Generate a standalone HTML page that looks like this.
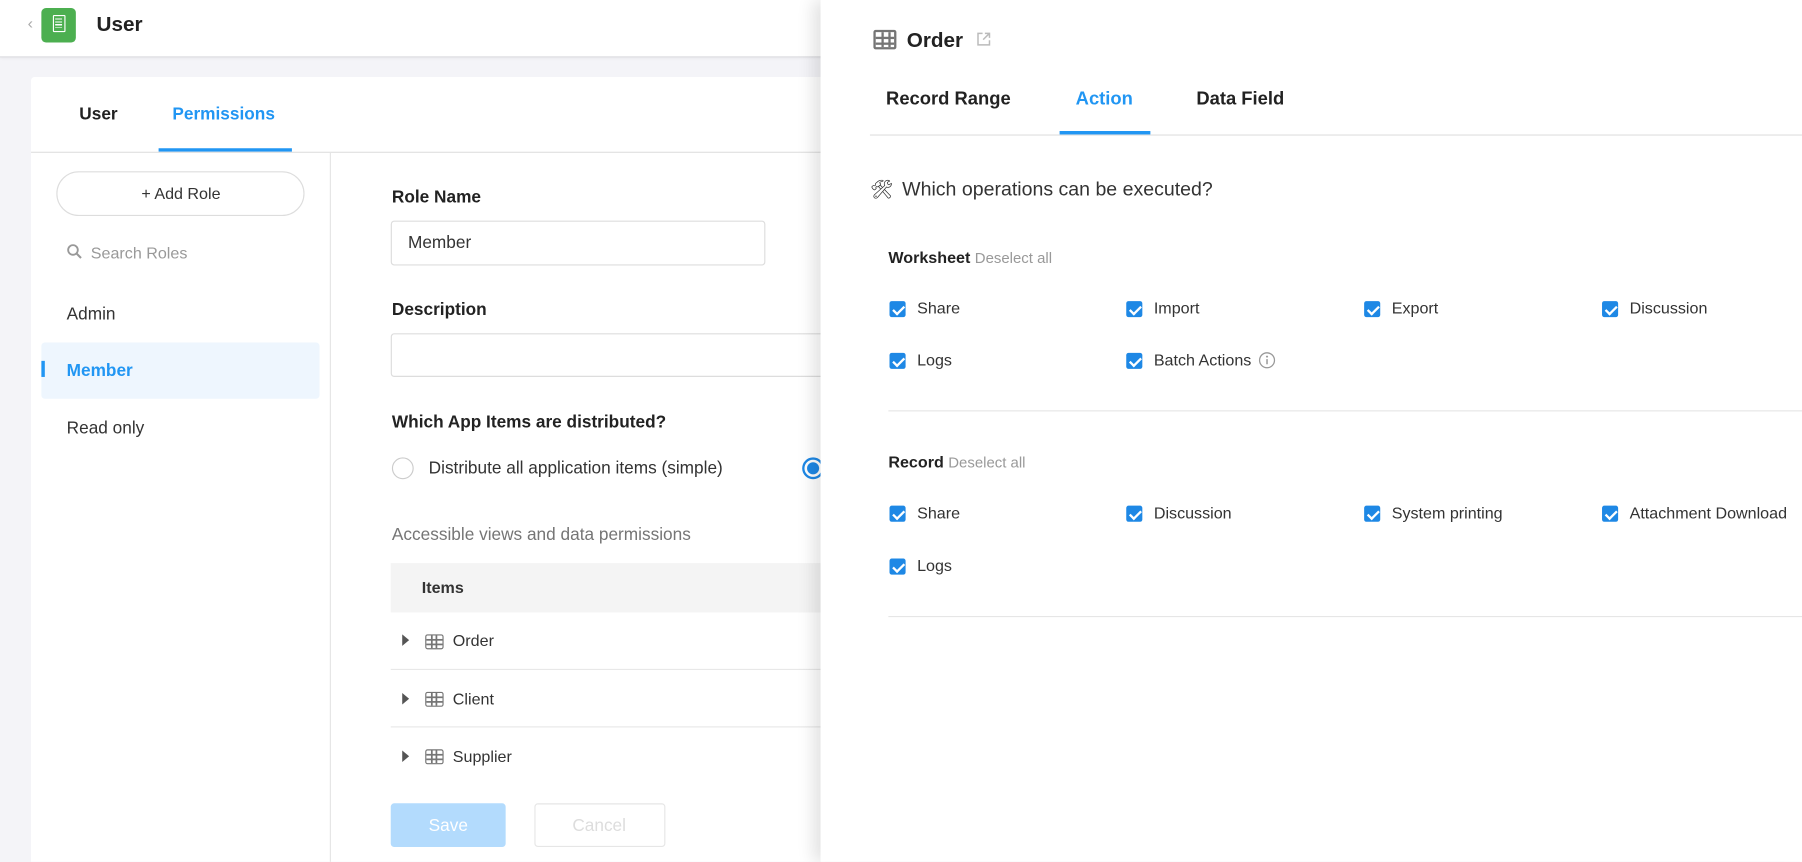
<!DOCTYPE html>
<html><head><meta charset="utf-8"><style>
*{box-sizing:border-box;margin:0;padding:0}
html,body{width:1802px;height:862px;overflow:hidden;background:#f4f4f8;font-family:"Liberation Sans",Arial,sans-serif;color:#333}
#w{position:absolute;left:0;top:0;width:1568px;height:750px;overflow:hidden;transform:scale(1.14923);transform-origin:0 0}
.a{position:absolute}
.t{position:absolute;white-space:nowrap;line-height:1}
.cb{position:absolute;width:14px;height:14px;background:#1e88e5;border-radius:2px}
.cb:after{content:"";position:absolute;left:4.5px;top:1.5px;width:4px;height:8px;border:solid #fff;border-width:0 2px 2px 0;transform:rotate(45deg)}
.grid{position:absolute;width:16px;height:13px;border:1.5px solid #757575;border-radius:2px;background:
linear-gradient(#757575,#757575) 0 3px/100% 1.5px no-repeat,
linear-gradient(#757575,#757575) 0 7px/100% 1.5px no-repeat,
linear-gradient(#757575,#757575) 3.5px 0/1.5px 100% no-repeat,
linear-gradient(#757575,#757575) 8px 0/1.5px 100% no-repeat}
.tri{position:absolute;width:0;height:0;border-left:6px solid #555;border-top:5px solid transparent;border-bottom:5px solid transparent}
.row{position:absolute;left:340px;width:380px;height:50px;border-bottom:1px solid #e8e8e8}
</style></head><body><div id="w">
<div class="a" style="left:0;top:0;width:1568px;height:50px;background:#fff;border-bottom:1px solid #dcdce0;box-shadow:0 1px 3px rgba(0,0,0,.06)"></div>
<div class="t" style="left:24px;top:13px;font-size:14px;color:#aaa">‹</div>
<div class="a" style="left:36px;top:7px;width:30px;height:30px;background:#4caf50;border-radius:4px"></div>
<div class="a" style="left:46px;top:13px;width:11px;height:15px;border:1.5px solid #fff;border-radius:1px"></div>
<div class="a" style="left:48px;top:16px;width:6px;height:8px;background:repeating-linear-gradient(#fff 0 1px,transparent 1px 2.5px)"></div>
<div class="t" style="left:84px;top:12px;font-size:18px;font-weight:bold;color:#222">User</div>
<div class="a" style="left:27px;top:67px;width:720px;height:683px;background:#fff;border-radius:3px 3px 0 0"></div>
<div class="t" style="left:69px;top:92px;font-size:15px;font-weight:bold;color:#222">User</div>
<div class="t" style="left:150px;top:92px;font-size:15px;font-weight:bold;color:#2196f3">Permissions</div>
<div class="a" style="left:138px;top:129px;width:116px;height:3px;background:#2196f3"></div>
<div class="a" style="left:27px;top:132px;width:700px;height:1px;background:#e0e0e0"></div>
<div class="a" style="left:287px;top:133px;width:1px;height:617px;background:#e6e6e6"></div>
<div class="a" style="left:49px;top:149px;width:216px;height:39px;border:1px solid #ddd;border-radius:20px"></div>
<div class="t" style="left:123px;top:161px;font-size:14px;color:#333">+ Add Role</div>
<svg class="a" style="left:58px;top:212px" width="14" height="14" viewBox="0 0 14 14"><circle cx="5.5" cy="5.5" r="4.2" fill="none" stroke="#999" stroke-width="1.6"/><path d="M8.6 8.6L12.5 12.5" stroke="#999" stroke-width="1.8"/></svg>
<div class="t" style="left:79px;top:213px;font-size:14px;color:#999">Search Roles</div>
<div class="t" style="left:58px;top:266px;font-size:15px;color:#333">Admin</div>
<div class="a" style="left:36px;top:298px;width:242px;height:49px;background:#eef6fe;border-radius:3px"></div>
<div class="a" style="left:36px;top:314px;width:3px;height:14px;background:#2196f3"></div>
<div class="t" style="left:58px;top:315px;font-size:15px;font-weight:bold;color:#2196f3">Member</div>
<div class="t" style="left:58px;top:365px;font-size:15px;color:#333">Read only</div>
<div class="t" style="left:341px;top:164px;font-size:15px;font-weight:bold;color:#222">Role Name</div>
<div class="a" style="left:340px;top:192px;width:326px;height:39px;border:1px solid #ddd;border-radius:3px"></div>
<div class="t" style="left:355px;top:204px;font-size:15px;color:#333">Member</div>
<div class="t" style="left:341px;top:262px;font-size:15px;font-weight:bold;color:#222">Description</div>
<div class="a" style="left:340px;top:290px;width:400px;height:38px;border:1px solid #ddd;border-radius:3px"></div>
<div class="t" style="left:341px;top:360px;font-size:15px;font-weight:bold;color:#222">Which App Items are distributed?</div>
<div class="a" style="left:341px;top:398px;width:19px;height:19px;border:1px solid #ccc;border-radius:50%"></div>
<div class="t" style="left:373px;top:400px;font-size:15px;color:#333">Distribute all application items (simple)</div>
<div class="a" style="left:698px;top:398px;width:19px;height:19px;border:2px solid #1e88e5;border-radius:50%;background:radial-gradient(#1e88e5 5px,#fff 5.5px)"></div>
<div class="t" style="left:341px;top:458px;font-size:15px;color:#757575">Accessible views and data permissions</div>
<div class="a" style="left:340px;top:490px;width:390px;height:43px;background:#f4f4f4"></div>
<div class="t" style="left:367px;top:504px;font-size:14px;font-weight:bold;color:#333">Items</div>
<div class="row" style="top:533px"></div><div class="row" style="top:583px"></div>
<div class="tri" style="left:350px;top:552px"></div><div class="grid" style="left:370px;top:552px"></div><div class="t" style="left:394px;top:550px;font-size:14px">Order</div>
<div class="tri" style="left:350px;top:603px"></div><div class="grid" style="left:370px;top:602px"></div><div class="t" style="left:394px;top:601px;font-size:14px">Client</div>
<div class="tri" style="left:350px;top:653px"></div><div class="grid" style="left:370px;top:652px"></div><div class="t" style="left:394px;top:651px;font-size:14px">Supplier</div>
<div class="a" style="left:340px;top:699px;width:100px;height:38px;background:#b3dbfd;border-radius:3px"></div>
<div class="t" style="left:373px;top:711px;font-size:15px;color:#fff">Save</div>
<div class="a" style="left:465px;top:699px;width:114px;height:38px;border:1px solid #e6e6e6;border-radius:3px"></div>
<div class="t" style="left:498px;top:711px;font-size:15px;color:#ddd">Cancel</div>
<div class="a" style="left:714px;top:0;width:854px;height:750px;background:#fff;box-shadow:-6px 0 14px rgba(0,0,0,.12)"></div>
<div class="grid" style="left:760px;top:26px;width:20px;height:17px;background:
linear-gradient(#757575,#757575) 0 4px/100% 2px no-repeat,linear-gradient(#757575,#757575) 0 9px/100% 2px no-repeat,linear-gradient(#757575,#757575) 4.5px 0/2px 100% no-repeat,linear-gradient(#757575,#757575) 10.5px 0/2px 100% no-repeat;border-width:2px"></div>
<div class="t" style="left:789px;top:26px;font-size:18px;font-weight:bold;color:#222">Order</div>
<svg class="a" style="left:849px;top:27px" width="14" height="14" viewBox="0 0 14 14"><path d="M6 2H2v10h10V8M8 2h4v4M12 2L6.5 7.5" fill="none" stroke="#bbb" stroke-width="1.3"/></svg>
<div class="t" style="left:771px;top:79px;font-size:16px;font-weight:bold;color:#222">Record Range</div>
<div class="t" style="left:936px;top:79px;font-size:16px;font-weight:bold;color:#2196f3">Action</div>
<div class="t" style="left:1041px;top:79px;font-size:16px;font-weight:bold;color:#222">Data Field</div>
<div class="a" style="left:757px;top:117px;width:811px;height:1px;background:#e0e0e0"></div>
<div class="a" style="left:922px;top:114px;width:79px;height:3px;background:#2196f3"></div>
<div class="t" style="left:757px;top:158px;font-size:16px">🛠</div>
<div class="t" style="left:785px;top:156px;font-size:17px;color:#333">Which operations can be executed?</div>
<div class="t" style="left:773px;top:217px;font-size:14px;font-weight:bold;color:#222">Worksheet <span style="font-weight:normal;font-size:13px;color:#999">Deselect all</span></div>
<div class="cb" style="left:774px;top:262px"></div><div class="t" style="left:798px;top:261px;font-size:14px">Share</div>
<div class="cb" style="left:980px;top:262px"></div><div class="t" style="left:1004px;top:261px;font-size:14px">Import</div>
<div class="cb" style="left:1187px;top:262px"></div><div class="t" style="left:1211px;top:261px;font-size:14px">Export</div>
<div class="cb" style="left:1394px;top:262px"></div><div class="t" style="left:1418px;top:261px;font-size:14px">Discussion</div>
<div class="cb" style="left:774px;top:307px"></div><div class="t" style="left:798px;top:306px;font-size:14px">Logs</div>
<div class="cb" style="left:980px;top:307px"></div><div class="t" style="left:1004px;top:306px;font-size:14px">Batch Actions</div>
<svg class="a" style="left:1095px;top:306px" width="15" height="15" viewBox="0 0 15 15"><circle cx="7.5" cy="7.5" r="6.5" fill="none" stroke="#999" stroke-width="1.1"/><path d="M7.5 6.5v4.5" stroke="#999" stroke-width="1.3"/><circle cx="7.5" cy="4.3" r=".9" fill="#999"/></svg>
<div class="a" style="left:773px;top:357px;width:795px;height:1px;background:#e6e6e6"></div>
<div class="t" style="left:773px;top:395px;font-size:14px;font-weight:bold;color:#222">Record <span style="font-weight:normal;font-size:13px;color:#999">Deselect all</span></div>
<div class="cb" style="left:774px;top:440px"></div><div class="t" style="left:798px;top:439px;font-size:14px">Share</div>
<div class="cb" style="left:980px;top:440px"></div><div class="t" style="left:1004px;top:439px;font-size:14px">Discussion</div>
<div class="cb" style="left:1187px;top:440px"></div><div class="t" style="left:1211px;top:439px;font-size:14px">System printing</div>
<div class="cb" style="left:1394px;top:440px"></div><div class="t" style="left:1418px;top:439px;font-size:14px">Attachment Download</div>
<div class="cb" style="left:774px;top:486px"></div><div class="t" style="left:798px;top:485px;font-size:14px">Logs</div>
<div class="a" style="left:773px;top:536px;width:795px;height:1px;background:#e6e6e6"></div>
</div></body></html>
